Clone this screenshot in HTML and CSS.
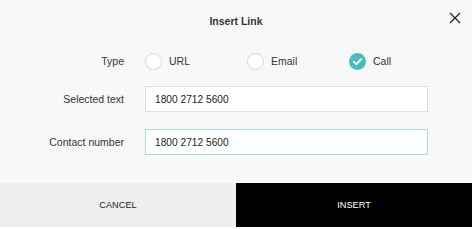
FILE: index.html
```html
<!DOCTYPE html>
<html lang="en">
<head>
    <meta charset="UTF-8">
    <meta name="viewport" content="width=device-width, initial-scale=1.0">
    <title>Insert Link</title>
    <link rel="stylesheet" href="styles.css">
</head>
<body>
    <div class="dialog">
        <div class="header">
            <span class="title">Insert Link</span>
            <button class="close" aria-label="Close">
                <svg width="12" height="12" viewBox="0 0 12 12">
                    <path d="M1 1 L11 11 M11 1 L1 11" stroke="#222" stroke-width="1.3" fill="none"/>
                </svg>
            </button>
        </div>
        <div class="form">
            <div class="row type-row">
                <label class="label">Type</label>
                <div class="options">
                    <div class="option">
                        <span class="radio"></span>
                        <span>URL</span>
                    </div>
                    <div class="option">
                        <span class="radio"></span>
                        <span>Email</span>
                    </div>
                    <div class="option">
                        <span class="radio checked">
                            <svg width="17" height="17" viewBox="0 0 17 17">
                                <path d="M4.8 8.8 L7.4 11.2 L12.2 6.2" stroke="#fff" stroke-width="1.8" fill="none" stroke-linecap="round" stroke-linejoin="round"/>
                            </svg>
                        </span>
                        <span>Call</span>
                    </div>
                </div>
            </div>
            <div class="row">
                <label class="label">Selected text</label>
                <input class="input" type="text" value="1800 2712 5600">
            </div>
            <div class="row">
                <label class="label">Contact number</label>
                <input class="input focus" type="text" value="1800 2712 5600">
            </div>
        </div>
        <div class="footer">
            <button class="btn cancel">CANCEL</button>
            <button class="btn insert">INSERT</button>
        </div>
    </div>
</body>
</html>
```
FILE: styles.css
```css
body {
    margin: 0;
    background-color: #fff;
    font-family: "Liberation Sans", Arial, sans-serif;
    color: #333;
}
.dialog {
    width: 472px;
    height: 227px;
    background-color: #f8f8f8;
    display: flex;
    flex-direction: column;
}
.header {
    height: 42px;
    display: flex;
    justify-content: center;
    align-items: center;
    position: relative;
}
.title {
    font-size: 10.5px;
    font-weight: bold;
    color: #333;
}
.close {
    position: absolute;
    right: 11px;
    top: 12px;
    border: none;
    background: none;
    padding: 0;
    width: 12px;
    height: 12px;
    cursor: pointer;
}
.form {
    display: flex;
    flex-direction: column;
    gap: 17px;
    padding-top: 6px;
    font-size: 10.5px;
}
.row {
    display: flex;
    align-items: center;
    gap: 21px;
    height: 26px;
}
.type-row {
    margin-bottom: -5px;
}
.label {
    width: 124px;
    text-align: right;
    color: #333;
}
.options {
    display: flex;
    align-items: center;
}
.option {
    width: 102px;
    display: flex;
    align-items: center;
    gap: 7px;
}
.radio {
    box-sizing: border-box;
    width: 17px;
    height: 17px;
    border: 1px solid #d6d6d6;
    border-radius: 50%;
    background-color: #fff;
    display: inline-flex;
}
.radio.checked {
    border: none;
    background-color: #4bbcbc;
}
.input {
    box-sizing: border-box;
    height: 26px;
    width: 283px;
    border: 1px solid #dedede;
    background-color: #fff;
    padding: 0 9px;
    font-family: "Liberation Sans", Arial, sans-serif;
    font-size: 10.2px;
    color: #222;
    outline: none;
}
.input.focus {
    border-color: #a9dcdc;
}
.footer {
    margin-top: auto;
    height: 44px;
    display: flex;
}
.btn {
    flex: 1;
    border: none;
    font-family: "Liberation Sans", Arial, sans-serif;
    font-size: 9.2px;
    cursor: pointer;
}
.cancel {
    background-color: #efefef;
    color: #222;
}
.insert {
    background-color: #000;
    color: #fff;
}
```
